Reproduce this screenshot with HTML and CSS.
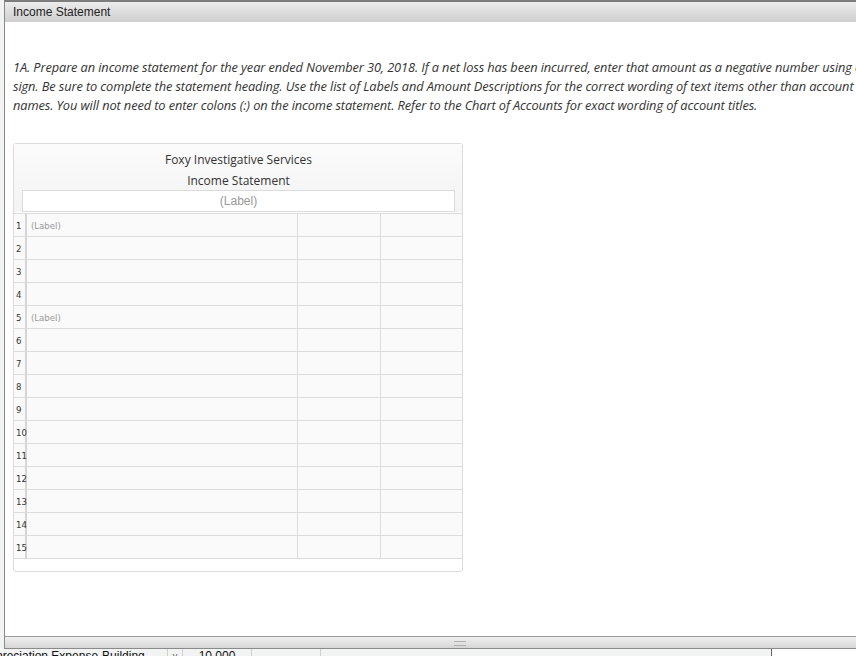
FILE: index.html
```html
<!DOCTYPE html>
<html>
<head>
<meta charset="utf-8">
<link rel="stylesheet" href="styles.css">
</head>
<body>
<div class="screen">
  <div class="dialog">
    <div class="titlebar">Income Statement</div>
    <div class="content">
      <p class="instructions">
        <span class="line">1A. Prepare an income statement for the year ended November 30, 2018. If a net loss has been incurred, enter that amount as a negative number using a minus</span>
        <span class="line">sign. Be sure to complete the statement heading. Use the list of Labels and Amount Descriptions for the correct wording of text items other than account</span>
        <span class="line">names. You will not need to enter colons (:) on the income statement. Refer to the Chart of Accounts for exact wording of account titles.</span>
      </p>
      <div class="panel">
        <div class="panel-head">
          <div class="head-line">Foxy Investigative Services</div>
          <div class="head-line">Income Statement</div>
          <div class="head-input">(Label)</div>
        </div>
        <div class="grid">
          <div class="num">1</div><div class="cell lbl">(Label)</div><div class="cell"></div><div class="cell"></div>
          <div class="num">2</div><div class="cell"></div><div class="cell"></div><div class="cell"></div>
          <div class="num">3</div><div class="cell"></div><div class="cell"></div><div class="cell"></div>
          <div class="num">4</div><div class="cell"></div><div class="cell"></div><div class="cell"></div>
          <div class="num">5</div><div class="cell lbl">(Label)</div><div class="cell"></div><div class="cell"></div>
          <div class="num">6</div><div class="cell"></div><div class="cell"></div><div class="cell"></div>
          <div class="num">7</div><div class="cell"></div><div class="cell"></div><div class="cell"></div>
          <div class="num">8</div><div class="cell"></div><div class="cell"></div><div class="cell"></div>
          <div class="num">9</div><div class="cell"></div><div class="cell"></div><div class="cell"></div>
          <div class="num">10</div><div class="cell"></div><div class="cell"></div><div class="cell"></div>
          <div class="num">11</div><div class="cell"></div><div class="cell"></div><div class="cell"></div>
          <div class="num">12</div><div class="cell"></div><div class="cell"></div><div class="cell"></div>
          <div class="num">13</div><div class="cell"></div><div class="cell"></div><div class="cell"></div>
          <div class="num">14</div><div class="cell"></div><div class="cell"></div><div class="cell"></div>
          <div class="num">15</div><div class="cell"></div><div class="cell"></div><div class="cell"></div>
        </div>
        <div class="panel-foot"></div>
      </div>
    </div>
    <div class="bottombar"><span class="grip"></span></div>
  </div>
  <div class="behind-row">
    <div class="b-acct">preciation Expense-Building</div>
    <div class="b-sel">v</div>
    <div class="b-amt">10,000</div>
    <div class="b-c1"></div>
    <div class="b-c2"></div>
    <div class="b-rest"></div>
  </div>
</div>
</body>
</html>
```
FILE: styles.css
```css
html, body {
  margin: 0;
  padding: 0;
}
.screen {
  width: 856px;
  height: 656px;
  overflow: hidden;
  background: #f2f3f3;
  display: flex;
  flex-direction: column;
  font-family: "Liberation Sans", Arial, sans-serif;
}
.dialog {
  margin-left: 4px;
  width: 900px;
  height: 647px;
  flex: none;
  border-top: 2px solid #7d7d7d;
  border-left: 1px solid #8a8a8a;
  background: #fff;
  display: flex;
  flex-direction: column;
}
.titlebar {
  height: 20px;
  line-height: 21px;
  padding-left: 8px;
  font-size: 12px;
  color: #222;
  background: linear-gradient(#ececec, #cfcfcf);
  flex: none;
}
.content {
  flex: 1;
  padding: 36px 0 0 8px;
}
.instructions {
  margin: 0;
  font-family: "Open Sans", "Noto Sans", sans-serif;
  font-style: italic;
  font-size: 12.8px;
  line-height: 19px;
  color: #333;
  letter-spacing: -0.1px;
}
.instructions .line {
  display: block;
  white-space: nowrap;
}
.panel {
  margin: 28px 0 0 0;
  width: 448px;
  border: 1px solid #dcdcdc;
  border-radius: 3px;
  background: #fff;
}
.panel-head {
  background: linear-gradient(#fbfbfb, #f3f3f3);
  padding: 6px 7px 0 8px;
  font-family: "Open Sans", "Noto Sans", sans-serif;
  font-size: 12px;
  color: #333;
  text-align: center;
}
.head-line {
  height: 20px;
  line-height: 20px;
}
.head-line + .head-line {
  line-height: 22px;
}
.head-input {
  margin-top: 0;
  height: 20px;
  line-height: 20px;
  border: 1px solid #dcdcdc;
  background: #fff;
  color: #999;
  font-family: "Liberation Sans", Arial, sans-serif;
  font-size: 12px;
}
.grid {
  display: grid;
  grid-template-columns: 13px 271px 83px 82px;
  grid-auto-rows: 23px;
  margin-top: 1px;
  margin-right: -1px;
  border-top: 1px solid #dcdcdc;
}
.num {
  border-right: 2px solid #d6d6d6;
  border-bottom: 1px solid #dcdcdc;
  background: #fafafa;
  font-family: "DejaVu Sans Condensed", "DejaVu Sans", sans-serif;
  font-size: 9.5px;
  color: #333;
  line-height: 23px;
  padding-left: 2px;
  white-space: nowrap;
  position: relative;
  z-index: 1;
}
.cell {
  border-right: 1px solid #dcdcdc;
  border-bottom: 1px solid #dcdcdc;
  background: #fafafa;
}
.cell.lbl {
  font-family: "DejaVu Sans Condensed", "DejaVu Sans", sans-serif;
  font-size: 9.5px;
  color: #999;
  line-height: 23px;
  padding-left: 4px;
}
.panel-foot {
  height: 12px;
}
.bottombar {
  flex: none;
  height: 11px;
  border-top: 1px solid #9a9a9a;
  border-bottom: 1px solid #8a8a8a;
  background: linear-gradient(#f0f0f0, #d6d6d6);
  position: relative;
}
.grip {
  position: absolute;
  left: 449px;
  top: 4px;
  width: 12px;
  height: 3px;
  border-top: 1px solid #b0b0b0;
  border-bottom: 1px solid #b0b0b0;
}
.behind-row {
  flex: 1;
  display: flex;
  font-size: 12px;
  color: #111;
  line-height: 14px;
}
.behind-row > div {
  height: 100%;
  box-sizing: border-box;
  overflow: hidden;
  white-space: nowrap;
}
.b-acct {
  width: 172px;
  margin-left: -4px;
  border-right: 1px solid #cfcfcf;
}
.b-sel {
  width: 15px;
  border-right: 1px solid #cfcfcf;
  font-size: 9px;
  text-align: center;
  color: #555;
}
.b-amt {
  width: 69px;
  border-right: 1px solid #cfcfcf;
  text-align: center;
}
.b-c1 {
  width: 69px;
  border-right: 1px solid #cfcfcf;
}
.b-c2 {
  width: 451px;
  border-right: 1px solid #666;
}
.b-rest {
  flex: 1;
  background: #fff;
}
```
